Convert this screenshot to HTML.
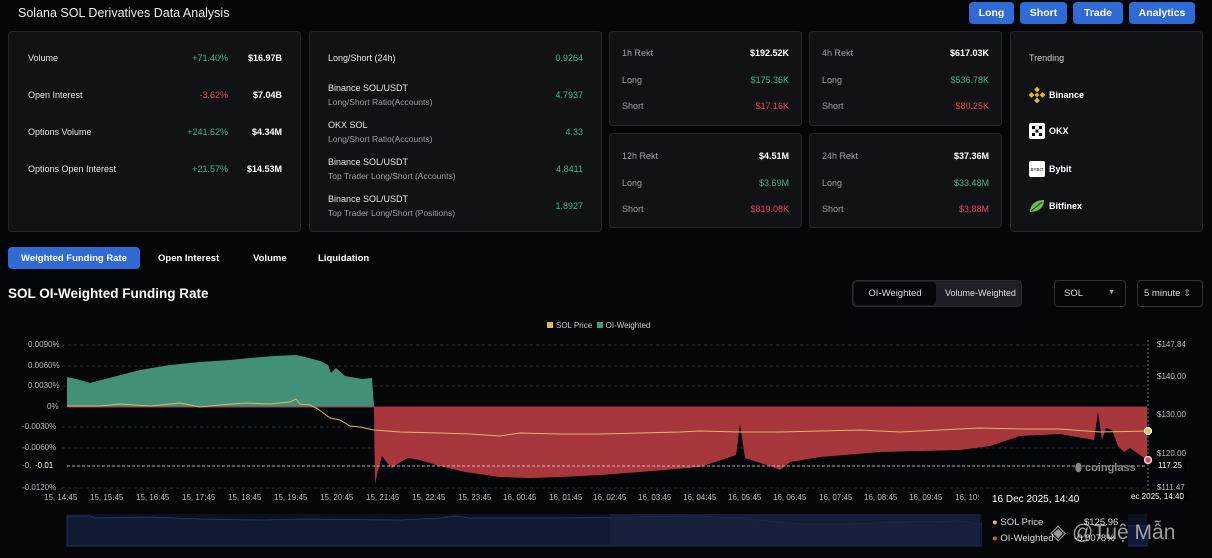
<!DOCTYPE html>
<html><head><meta charset="utf-8"><style>
*{margin:0;padding:0;box-sizing:border-box}
body{width:1212px;height:558px;background:#05060a;font-family:"Liberation Sans",sans-serif;color:#e6e6e6;position:relative;overflow:hidden;font-size:9px}
.abs{position:absolute}
.card{position:absolute;background:#101216;border:1px solid #23262d;border-radius:4px}
.btn{position:absolute;top:2px;height:22px;background:#2f6bd3;color:#fff;font-weight:bold;font-size:10.5px;border-radius:4px;display:flex;align-items:center;justify-content:center}
.g{color:#3fb68b}.r{color:#e5484d}.w{color:#fff;font-weight:bold}
.row{position:absolute;left:0;right:0;font-size:9px}
.sub{color:#9aa0a6;font-size:8.5px}
.ax{position:absolute;font-size:8px;color:#bbb}
</style></head><body>
<div class="abs" style="left:18px;top:6px;font-size:12.5px;color:#eee">Solana SOL Derivatives Data Analysis</div>
<div class="btn" style="left:969px;width:45px">Long</div>
<div class="btn" style="left:1020px;width:47px">Short</div>
<div class="btn" style="left:1073px;width:50px">Trade</div>
<div class="btn" style="left:1129px;width:66px">Analytics</div>

<div class="card" style="left:8px;top:31px;width:293px;height:201px">
 <div class="row" style="top:21px"><span class="abs" style="left:19px">Volume</span><span class="abs g" style="right:72px">+71.40%</span><span class="abs w" style="right:18px">$16.97B</span></div>
 <div class="row" style="top:58px"><span class="abs" style="left:19px">Open Interest</span><span class="abs r" style="right:72px">-3.62%</span><span class="abs w" style="right:18px">$7.04B</span></div>
 <div class="row" style="top:95px"><span class="abs" style="left:19px">Options Volume</span><span class="abs g" style="right:72px">+241.62%</span><span class="abs w" style="right:18px">$4.34M</span></div>
 <div class="row" style="top:132px"><span class="abs" style="left:19px">Options Open Interest</span><span class="abs g" style="right:72px">+21.57%</span><span class="abs w" style="right:18px">$14.53M</span></div>
</div>
<div class="card" style="left:309px;top:31px;width:293px;height:201px">
 <div class="row" style="top:21px"><span class="abs" style="left:18px">Long/Short (24h)</span><span class="abs g" style="right:18px">0.9264</span></div>
 <div class="row" style="top:51px"><span class="abs" style="left:18px">Binance SOL/USDT</span><span class="abs sub" style="left:18px;top:14px">Long/Short Ratio(Accounts)</span><span class="abs g" style="right:18px;top:7px">4.7937</span></div>
 <div class="row" style="top:88px"><span class="abs" style="left:18px">OKX SOL</span><span class="abs sub" style="left:18px;top:14px">Long/Short Ratio(Accounts)</span><span class="abs g" style="right:18px;top:7px">4.33</span></div>
 <div class="row" style="top:125px"><span class="abs" style="left:18px">Binance SOL/USDT</span><span class="abs sub" style="left:18px;top:14px">Top Trader Long/Short (Accounts)</span><span class="abs g" style="right:18px;top:7px">4.8411</span></div>
 <div class="row" style="top:162px"><span class="abs" style="left:18px">Binance SOL/USDT</span><span class="abs sub" style="left:18px;top:14px">Top Trader Long/Short (Positions)</span><span class="abs g" style="right:18px;top:7px">1.8927</span></div>
</div>

<div class="card" style="left:609px;top:31px;width:193px;height:95px">
 <div class="row" style="top:16px"><span class="abs sub" style="left:12px;font-size:9px">1h Rekt</span><span class="abs w" style="right:12px">$192.52K</span></div>
 <div class="row" style="top:43px"><span class="abs sub" style="left:12px;font-size:9px">Long</span><span class="abs g" style="right:12px">$175.36K</span></div>
 <div class="row" style="top:69px"><span class="abs sub" style="left:12px;font-size:9px">Short</span><span class="abs r" style="right:12px">$17.16K</span></div>
</div>
<div class="card" style="left:809px;top:31px;width:193px;height:95px">
 <div class="row" style="top:16px"><span class="abs sub" style="left:12px;font-size:9px">4h Rekt</span><span class="abs w" style="right:12px">$617.03K</span></div>
 <div class="row" style="top:43px"><span class="abs sub" style="left:12px;font-size:9px">Long</span><span class="abs g" style="right:12px">$536.78K</span></div>
 <div class="row" style="top:69px"><span class="abs sub" style="left:12px;font-size:9px">Short</span><span class="abs r" style="right:12px">$80.25K</span></div>
</div>
<div class="card" style="left:609px;top:133px;width:193px;height:95px">
 <div class="row" style="top:17px"><span class="abs sub" style="left:12px;font-size:9px">12h Rekt</span><span class="abs w" style="right:12px">$4.51M</span></div>
 <div class="row" style="top:44px"><span class="abs sub" style="left:12px;font-size:9px">Long</span><span class="abs g" style="right:12px">$3.69M</span></div>
 <div class="row" style="top:70px"><span class="abs sub" style="left:12px;font-size:9px">Short</span><span class="abs r" style="right:12px">$819.08K</span></div>
</div>
<div class="card" style="left:809px;top:133px;width:193px;height:95px">
 <div class="row" style="top:17px"><span class="abs sub" style="left:12px;font-size:9px">24h Rekt</span><span class="abs w" style="right:12px">$37.36M</span></div>
 <div class="row" style="top:44px"><span class="abs sub" style="left:12px;font-size:9px">Long</span><span class="abs g" style="right:12px">$33.48M</span></div>
 <div class="row" style="top:70px"><span class="abs sub" style="left:12px;font-size:9px">Short</span><span class="abs r" style="right:12px">$3.88M</span></div>
</div>
<div class="card" style="left:1010px;top:31px;width:193px;height:201px">
 <div class="abs" style="left:18px;top:21px;color:#ccc">Trending</div>
 <div class="abs" style="left:18px;top:55px;display:flex;align-items:center;gap:4px"><svg width="16" height="16" viewBox="0 0 16 16"><g fill="#f0b90b"><rect x="6" y="0.5" width="4" height="4" transform="rotate(45 8 2.5)"/><rect x="6" y="11.5" width="4" height="4" transform="rotate(45 8 13.5)"/><rect x="0.5" y="6" width="4" height="4" transform="rotate(45 2.5 8)"/><rect x="11.5" y="6" width="4" height="4" transform="rotate(45 13.5 8)"/><rect x="6.3" y="6.3" width="3.4" height="3.4" transform="rotate(45 8 8)"/></g></svg><span class="w">Binance</span></div>
 <div class="abs" style="left:18px;top:91px;display:flex;align-items:center;gap:4px"><svg width="16" height="16" viewBox="0 0 16 16"><rect width="16" height="16" rx="2" fill="#fff"/><g fill="#000"><rect x="3" y="3" width="3" height="3"/><rect x="10" y="3" width="3" height="3"/><rect x="6.5" y="6.5" width="3" height="3"/><rect x="3" y="10" width="3" height="3"/><rect x="10" y="10" width="3" height="3"/></g></svg><span class="w">OKX</span></div>
 <div class="abs" style="left:18px;top:129px;display:flex;align-items:center;gap:4px"><svg width="16" height="16" viewBox="0 0 16 16"><rect width="16" height="16" rx="2" fill="#fff"/><text x="8" y="10" font-size="4.5" text-anchor="middle" fill="#000" font-family="Liberation Sans">BYBIT</text></svg><span class="w">Bybit</span></div>
 <div class="abs" style="left:18px;top:166px;display:flex;align-items:center;gap:4px"><svg width="16" height="16" viewBox="0 0 16 16"><path d="M1 14C1 7 6 2 15 2C15 9 10 14 1 14Z" fill="#6fbf4a"/><path d="M2 13L13 4" stroke="#1c5e2e" stroke-width="1.2"/></svg><span class="w">Bitfinex</span></div>
</div>

<div class="abs" style="left:8px;top:247px;width:132px;height:22px;background:#2f6bd3;border-radius:4px;color:#fff;font-weight:bold;font-size:9.5px;display:flex;align-items:center;justify-content:center">Weighted Funding Rate</div>
<div class="abs w" style="left:158px;top:253px;font-size:9.5px">Open Interest</div>
<div class="abs w" style="left:253px;top:253px;font-size:9.5px">Volume</div>
<div class="abs w" style="left:318px;top:253px;font-size:9.5px">Liquidation</div>
<div class="abs w" style="left:8px;top:286px;font-size:13.5px">SOL OI-Weighted Funding Rate</div>

<div class="abs" style="left:852px;top:280px;width:170px;height:27px;background:#1c1f25;border-radius:5px;border:1px solid #2a2d33"></div>
<div class="abs" style="left:854px;top:282px;width:82px;height:23px;background:#05060a;border-radius:4px;color:#ddd;font-size:9.5px;display:flex;align-items:center;justify-content:center">OI-Weighted</div>
<div class="abs" style="left:945px;top:288px;color:#ddd;font-size:9px">Volume-Weighted</div>
<div class="abs" style="left:1054px;top:280px;width:72px;height:27px;border:1px solid #2f3238;border-radius:4px;color:#ddd;font-size:9.5px;padding:7px 9px">SOL<span style="position:absolute;right:10px;top:8px;font-size:7px;color:#aaa">▼</span></div>
<div class="abs" style="left:1137px;top:280px;width:66px;height:27px;border:1px solid #2f3238;border-radius:4px;color:#ddd;font-size:9.5px;padding:7px 6px">5 minute <span style="color:#999">⇕</span></div>

<div class="abs" style="left:547px;top:321px;font-size:8px;color:#ccc"><span style="display:inline-block;width:6px;height:6px;background:#e0b95c;margin-right:3px"></span>SOL Price &nbsp;<span style="display:inline-block;width:6px;height:6px;background:#4a9a7a;margin-right:3px"></span>OI-Weighted</div>

<svg class="abs" style="left:0;top:330px" width="1212" height="228" viewBox="0 330 1212 228">
 <g stroke="#2a2c31" stroke-dasharray="3,3" stroke-width="1">
  <line x1="62" y1="345" x2="1148" y2="345"/><line x1="62" y1="366" x2="1148" y2="366"/><line x1="62" y1="386" x2="1148" y2="386"/><line x1="62" y1="427" x2="1148" y2="427"/><line x1="62" y1="448" x2="1148" y2="448"/><line x1="62" y1="488" x2="1148" y2="488"/>
 </g>
 <path d="M67 407L67 377L80 380L90 383L105 379L140 370L170 365L200 362L230 360L250 358L275 356L296 355L305 357L320 361L328 365L331 373L336 368L345 376L362 379L372 378L374 407Z" fill="#43907a"/>
 <path d="M374 407L1147 407L1147 460L1130 448L1124 452L1118 446L1112 430L1106 428L1102 440L1098 412L1094 440L1060 434L1020 436L990 446L960 450L920 451L880 452L820 457L790 462L780 470L770 466L745 458L740 424L736 455L700 467L640 472L600 475L560 477L530 478L500 477L465 472L440 466L420 460L408 458L400 462L392 468L388 464L382 456L378 470L375 484Z" fill="#a8373d"/>
 <line x1="67" y1="407" x2="1147" y2="407" stroke="#a8373d" stroke-width="1"/>
 <path d="M67 406L100 406L120 404L150 406L180 403L200 407L220 405L245 403L270 404L290 402L296 399L300 404L310 405L318 409L330 418L340 420L350 426L360 427L374 430L400 432L440 433L470 434L500 436L520 433L560 434L600 434L640 433L680 432L700 431L740 432L780 432L820 431L860 430L900 432L940 430L980 428L1020 429L1060 429L1100 432L1148 431" fill="none" stroke="#e0b95c" stroke-width="1"/>
 <line x1="67" y1="466" x2="1147" y2="466" stroke="#ddd" stroke-dasharray="3,2" stroke-width="0.8"/>
 <line x1="1148" y1="340" x2="1148" y2="490" stroke="#888" stroke-dasharray="2,2" stroke-width="0.8"/>
 <circle cx="1148" cy="431" r="3.5" fill="#e0b95c" stroke="#fff" stroke-width="1.2"/>
 <circle cx="1148" cy="460" r="3.5" fill="#e5484d" stroke="#fff" stroke-width="1.2"/>
 <rect x="67" y="514" width="1080" height="32" fill="#0c1120"/>
 <path d="M67 516L90 516L95 518L150 517L200 519L260 520L300 519L400 520L440 518L455 516L470 518L560 518L620 517L700 516L740 518L800 524L850 524L900 522L960 521L980 524L1147 526L1147 546L67 546Z" fill="#111a33" stroke="#2a3a6a" stroke-width="0.8"/>
 <rect x="610" y="514" width="370" height="32" fill="#1a2440" opacity="0.7"/>
</svg>

<div class="ax" style="left:28px;top:340px">0.0090%</div>
<div class="ax" style="left:28px;top:361px">0.0060%</div>
<div class="ax" style="left:28px;top:381px">0.0030%</div>
<div class="ax" style="left:47px;top:402px">0%</div>
<div class="ax" style="left:22px;top:422px">-0.0030%</div>
<div class="ax" style="left:22px;top:443px">-0.0060%</div>
<div class="ax" style="left:22px;top:461px">-0.</div>
<div class="abs" style="left:32px;top:459px;background:#000;color:#fff;font-size:8px;padding:2px 3px">-0.01</div>
<div class="ax" style="left:22px;top:483px">-0.0120%</div>

<div class="ax" style="left:1157px;top:340px">$147.84</div>
<div class="ax" style="left:1157px;top:372px">$140.00</div>
<div class="ax" style="left:1157px;top:410px">$130.00</div>
<div class="ax" style="left:1157px;top:449px">$120.00</div>
<div class="abs" style="left:1153px;top:459px;background:#000;color:#fff;font-size:8px;padding:2px 5px">117.25</div>
<div class="ax" style="left:1157px;top:483px">$111.47</div>
<div class="abs" style="left:1075px;top:462px;color:#888;font-weight:bold;font-size:11px">⬮ coinglass</div>

<div class="ax" style="left:0;top:493px;width:1000px;white-space:nowrap">
<span class="abs" style="left:44px">15, 14:45</span><span class="abs" style="left:90px">15, 15:45</span><span class="abs" style="left:136px">15, 16:45</span><span class="abs" style="left:182px">15, 17:45</span><span class="abs" style="left:228px">15, 18:45</span><span class="abs" style="left:274px">15, 19:45</span><span class="abs" style="left:320px">15, 20:45</span><span class="abs" style="left:366px">15, 21:45</span><span class="abs" style="left:412px">15, 22:45</span><span class="abs" style="left:458px">15, 23:45</span><span class="abs" style="left:503px">16, 00:45</span><span class="abs" style="left:549px">16, 01:45</span><span class="abs" style="left:593px">16, 02:45</span><span class="abs" style="left:638px">16, 03:45</span><span class="abs" style="left:683px">16, 04:45</span><span class="abs" style="left:728px">16, 05:45</span><span class="abs" style="left:773px">16, 06:45</span><span class="abs" style="left:819px">16, 07:45</span><span class="abs" style="left:864px">16, 08:45</span><span class="abs" style="left:909px">16, 09:45</span><span class="abs" style="left:955px">16, 10:</span>
</div>
<div class="abs" style="left:1128px;top:490px;background:#000;color:#fff;font-size:8px;padding:2px 3px">ec 2025, 14:40</div>

<div class="abs" style="left:982px;top:489px;width:146px;height:69px;background:#05060a">
 <div class="abs" style="left:10px;top:5px;font-size:10px;color:#fff">16 Dec 2025, 14:40</div>
 <div class="abs" style="left:10px;top:28px;font-size:9.5px;color:#ddd"><span style="color:#e0b95c">●</span> SOL Price</div>
 <div class="abs" style="left:102px;top:28px;font-size:9.5px;color:#ddd">$125.96</div>
 <div class="abs" style="left:10px;top:44px;font-size:9.5px;color:#ddd"><span style="color:#e5484d">●</span> OI-Weighted</div>
 <div class="abs" style="left:92px;top:44px;font-size:9.5px;color:#ddd">-0.0078%</div>
</div>
<div class="abs" style="left:1050px;top:520px;font-size:21px;color:rgba(255,255,255,0.6)">◈ @Tuệ Mẫn</div>
</body></html>
